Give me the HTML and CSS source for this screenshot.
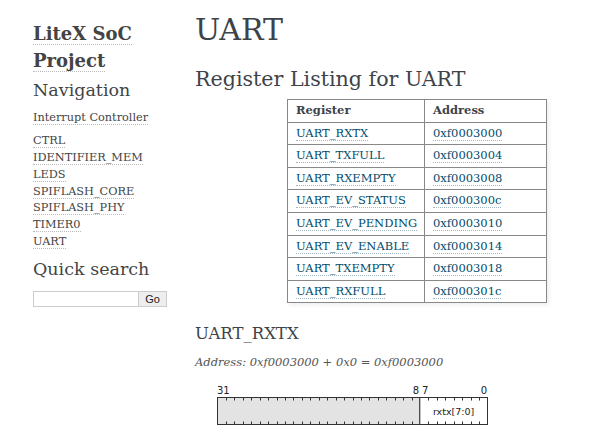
FILE: index.html
```html
<!DOCTYPE html>
<html lang="en">
<head>
    <meta charset="UTF-8">
    <meta name="viewport" content="width=device-width, initial-scale=1.0">
    <title>UART &mdash; LiteX SoC Project</title>
    <link rel="stylesheet" href="styles.css">
</head>
<body>
    <div class="document">
        <div class="sphinxsidebar">
            <h1 class="logo"><a href="#">LiteX SoC Project</a></h1>

            <h3>Navigation</h3>
            <ul class="toc first">
                <li><a href="#">Interrupt Controller</a></li>
            </ul>
            <ul class="toc">
                <li><a href="#">CTRL</a></li>
                <li><a href="#">IDENTIFIER_MEM</a></li>
                <li><a href="#">LEDS</a></li>
                <li><a href="#">SPIFLASH_CORE</a></li>
                <li><a href="#">SPIFLASH_PHY</a></li>
                <li><a href="#">TIMER0</a></li>
                <li><a href="#">UART</a></li>
            </ul>

            <h3>Quick search</h3>
            <form class="search">
                <input type="text" name="q">
                <button type="submit">Go</button>
            </form>
        </div>

        <div class="body">
            <h1>UART</h1>

            <h2>Register Listing for UART</h2>
            <table class="docutils">
                <thead>
                    <tr><th class="col-reg">Register</th><th>Address</th></tr>
                </thead>
                <tbody>
                    <tr><td><a href="#">UART_RXTX</a></td><td><a href="#">0xf0003000</a></td></tr>
                    <tr><td><a href="#">UART_TXFULL</a></td><td><a href="#">0xf0003004</a></td></tr>
                    <tr><td><a href="#">UART_RXEMPTY</a></td><td><a href="#">0xf0003008</a></td></tr>
                    <tr><td><a href="#">UART_EV_STATUS</a></td><td><a href="#">0xf000300c</a></td></tr>
                    <tr><td><a href="#">UART_EV_PENDING</a></td><td><a href="#">0xf0003010</a></td></tr>
                    <tr><td><a href="#">UART_EV_ENABLE</a></td><td><a href="#">0xf0003014</a></td></tr>
                    <tr><td><a href="#">UART_TXEMPTY</a></td><td><a href="#">0xf0003018</a></td></tr>
                    <tr><td><a href="#">UART_RXFULL</a></td><td><a href="#">0xf000301c</a></td></tr>
                </tbody>
            </table>

            <h3>UART_RXTX</h3>
            <p class="address"><em>Address: 0xf0003000 + 0x0 = 0xf0003000</em></p>

            <svg class="bitfield" width="290" height="44" viewBox="0 0 290 44">
                <g class="labels">
                    <text x="2" y="11">31</text>
                    <text x="204" y="11" text-anchor="end">8</text>
                    <text x="207" y="11">7</text>
                    <text x="272" y="11" text-anchor="end">0</text>
                </g>
                <rect x="2.5" y="14.5" width="202.3" height="27" fill="#e3e3e3" stroke="#333"/>
                <rect x="204.8" y="14.5" width="67.7" height="27" fill="#fff" stroke="#333"/>
                <path id="ticks" stroke="#333" fill="none" d=""/>
                <text class="field" x="238.6" y="32" text-anchor="middle">rxtx[7:0]</text>
            </svg>
        </div>
    </div>

    <script>
        // draw the tick marks for every bit boundary inside a field
        var ticks = document.getElementById('ticks');
        var left = 2.5, bit = 270 / 32, d = '';
        for (var i = 1; i < 32; i++) {
            if (i === 24) continue;
            var x = Math.round(left + i * bit) + 0.5;
            d += 'M' + x + ' 14.5v3M' + x + ' 41.5v-3';
        }
        ticks.setAttribute('d', d);
    </script>
</body>
</html>
```

FILE: styles.css
```css
body {
    margin: 0;
    font-family: 'DejaVu Serif', Georgia, serif;
    font-size: 11.5px;
    color: #3e4349;
    background-color: white;
}
a {
    color: #004b6b;
    text-decoration: none;
    border-bottom: 1px dotted #9fb8c4;
}
.document {
    display: flex;
}
.sphinxsidebar {
    width: 129px;
    flex-shrink: 0;
    padding: 20px 0 0 33px;
    color: #444;
}
.sphinxsidebar a {
    color: #444;
    border-bottom: 1px dotted #bbb;
}
.sphinxsidebar h1.logo {
    margin: 0;
    font-size: 18px;
    line-height: 27px;
    font-weight: bold;
}
.sphinxsidebar h3 {
    margin: 6px 0 0;
    font-size: 17.5px;
    line-height: 21px;
    font-weight: normal;
    color: #444;
}
.toc {
    list-style: none;
    margin: 7px 0 0;
    padding: 0;
    font-size: 11.3px;
    line-height: 16.8px;
}
.toc.first {
    margin-top: 8.5px;
}
.toc + h3 {
    margin-top: 8px;
}
.search {
    display: flex;
    margin-top: 11px;
}
.search input {
    box-sizing: border-box;
    flex: 0 0 106px;
    width: 106px;
    height: 16px;
    margin: 0;
    border: 1px solid #ccc;
    padding: 0 3px;
}
.search button {
    box-sizing: border-box;
    flex: 0 0 28px;
    width: 28px;
    height: 16px;
    margin: 0;
    padding: 0;
    border: 1px solid #ccc;
    border-left: none;
    background-color: #eee;
    font-family: 'Liberation Sans', Arial, sans-serif;
    font-size: 11px;
    color: #222;
}
.body {
    flex: 1;
    padding: 12px 0 0 33px;
}
.body h1, .body h2, .body h3 {
    margin: 0;
    font-weight: normal;
}
.body h1 {
    font-size: 30px;
    line-height: 36px;
}
.body h2 {
    margin-top: 19px;
    font-size: 20.6px;
    line-height: 25px;
}
.body h3 {
    margin-top: 21px;
    font-size: 16.5px;
    line-height: 20px;
}
table.docutils {
    margin: 7px 0 0 92px;
    width: 260px;
    table-layout: fixed;
    border-collapse: collapse;
    border: 1px solid #888;
    box-shadow: 2px 2px 4px #eee;
}
table.docutils th, table.docutils td {
    border: 1px solid #888;
    padding: 2px 4px 3px 8px;
    line-height: 16.6px;
    text-align: left;
    white-space: nowrap;
}
table.docutils th {
    font-weight: bold;
}
.col-reg {
    width: 124px;
}
.address {
    margin: 10px 0 0;
    line-height: 16.8px;
    color: #555;
}
.bitfield {
    display: block;
    margin: 12px 0 0 20px;
}
.bitfield text {
    font-family: 'DejaVu Sans', Verdana, sans-serif;
    font-size: 10px;
    fill: #222;
}
.bitfield .field {
    font-size: 9.5px;
}
```
